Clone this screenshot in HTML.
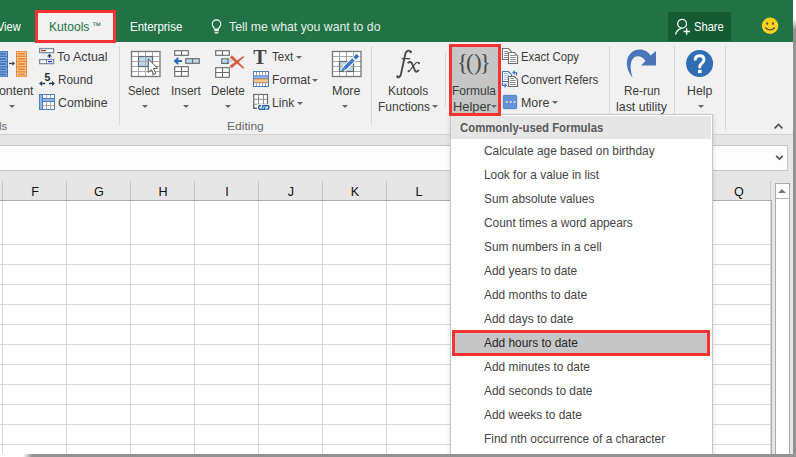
<!DOCTYPE html><html><head><meta charset="utf-8"><style>
html,body{margin:0;padding:0;}
body{width:796px;height:457px;position:relative;overflow:hidden;background:#fff;font-family:"Liberation Sans",sans-serif;}
#shot{position:absolute;left:0;top:0;width:793px;height:454px;overflow:hidden;background:#fff;}
.a{position:absolute;}
.t{position:absolute;white-space:nowrap;font-size:11.8px;line-height:14px;color:#3c3c3c;}
.arr{position:absolute;width:0;height:0;border-left:3px solid transparent;border-right:3px solid transparent;border-top:3px solid #666;}
.sep{position:absolute;width:1px;background:#d6d6d6;}
.hl{position:absolute;height:1px;background:#d9d9d9;}
.vl{position:absolute;width:1px;background:#d9d9d9;}
.ch{position:absolute;top:182px;height:20px;line-height:20px;text-align:center;font-size:12.6px;color:#111;}
.mi{position:absolute;left:484px;white-space:nowrap;font-size:11.8px;line-height:14px;color:#444;}
</style></head><body>
<div class="a" style="left:793px;top:19px;width:3px;height:438px;background:linear-gradient(#fff,#939393 11px);"></div>
<div class="a" style="left:23px;top:454px;width:773px;height:3px;background:linear-gradient(90deg,#fff,#939393 9px);"></div>
<div id="shot">
<div class="a" style="left:0;top:0;width:793px;height:42px;background:#217346;"></div>
<div class="t" style="left:-3.5px;top:19.70px;color:#fff;font-size:12.4px;transform:scaleX(0.8859);transform-origin:0 0;">View</div>
<div class="a" style="left:35px;top:10px;width:75px;height:27px;background:#f1f1f1;border:3px solid #f1f1f1;"></div>
<div class="a" style="left:35px;top:10px;width:75px;height:27px;border:3px solid #f83232;z-index:3;"></div>
<div class="t" style="left:49px;top:19.70px;color:#217346;font-size:12.4px;transform:scaleX(0.9772);transform-origin:0 0;">Kutools</div>
<div class="t" style="left:91.6px;top:18.97px;color:#217346;font-size:9.6px;transform:scaleX(0.9590);transform-origin:0 0;">&#8482;</div>
<div class="t" style="left:130px;top:19.70px;color:#fff;font-size:12.4px;transform:scaleX(0.9259);transform-origin:0 0;">Enterprise</div>
<div class="t" style="left:228.5px;top:19.70px;color:#e6eee9;font-size:12.4px;transform:scaleX(0.9908);transform-origin:0 0;">Tell me what you want to do</div>
<div class="a" style="left:668px;top:12px;width:63px;height:29px;background:#145a32;"></div>
<div class="t" style="left:693.5px;top:19.70px;color:#fff;font-size:12.4px;transform:scaleX(0.9009);transform-origin:0 0;">Share</div>
<div class="a" style="left:0;top:42px;width:793px;height:92px;background:#f1f1f1;"></div>
<div class="a" style="left:0;top:134px;width:793px;height:1px;background:#d2d2d2;"></div>
<div class="sep" style="left:119px;top:46px;height:79px"></div>
<div class="sep" style="left:371px;top:46px;height:79px"></div>
<div class="sep" style="left:445px;top:52px;height:55px"></div>
<div class="sep" style="left:609px;top:46px;height:79px"></div>
<div class="sep" style="left:674px;top:46px;height:79px"></div>
<div class="sep" style="left:725px;top:46px;height:84px"></div>
<div class="t" style="left:-10px;top:83.70px;font-size:12.4px;transform:scaleX(1.0022);transform-origin:0 0;">Content</div>
<div class="arr" style="left:9px;top:104.5px;border-top-color:#666"></div>
<div class="t" style="left:-19.5px;top:119.05px;color:#666;font-size:11.4px;transform:scaleX(0.9777);transform-origin:0 0;">Tools</div>
<div class="t" style="left:57.3px;top:49.70px;font-size:12.4px;transform:scaleX(1.0044);transform-origin:0 0;">To Actual</div>
<div class="t" style="left:57.7px;top:72.70px;font-size:12.4px;transform:scaleX(0.9530);transform-origin:0 0;">Round</div>
<div class="t" style="left:57.7px;top:95.70px;font-size:12.4px;transform:scaleX(1.0001);transform-origin:0 0;">Combine</div>
<div class="t" style="left:128.2px;top:83.70px;font-size:12.4px;transform:scaleX(0.9147);transform-origin:0 0;">Select</div>
<div class="arr" style="left:142px;top:104.5px;border-top-color:#666"></div>
<div class="t" style="left:171.4px;top:83.70px;font-size:12.4px;transform:scaleX(0.9645);transform-origin:0 0;">Insert</div>
<div class="arr" style="left:183px;top:104.5px;border-top-color:#666"></div>
<div class="t" style="left:211.4px;top:83.70px;font-size:12.4px;transform:scaleX(0.9462);transform-origin:0 0;">Delete</div>
<div class="arr" style="left:225px;top:104.5px;border-top-color:#666"></div>
<div class="t" style="left:227px;top:119.05px;color:#666;font-size:11.4px;transform:scaleX(1.0561);transform-origin:0 0;">Editing</div>
<div class="t" style="left:271.6px;top:49.70px;font-size:12.4px;transform:scaleX(0.9369);transform-origin:0 0;">Text</div>
<div class="arr" style="left:295.5px;top:55.5px;border-top-color:#666"></div>
<div class="t" style="left:271.7px;top:72.70px;font-size:12.4px;transform:scaleX(0.9809);transform-origin:0 0;">Format</div>
<div class="arr" style="left:312.3px;top:78.5px;border-top-color:#666"></div>
<div class="t" style="left:271.7px;top:95.70px;font-size:12.4px;transform:scaleX(0.9809);transform-origin:0 0;">Link</div>
<div class="arr" style="left:296.5px;top:101.5px;border-top-color:#666"></div>
<div class="t" style="left:331.8px;top:83.70px;font-size:12.4px;transform:scaleX(1.0059);transform-origin:0 0;">More</div>
<div class="arr" style="left:342px;top:104.5px;border-top-color:#666"></div>
<div class="t" style="left:387.7px;top:83.70px;font-size:12.4px;transform:scaleX(0.9748);transform-origin:0 0;">Kutools</div>
<div class="t" style="left:377.7px;top:99.70px;font-size:12.4px;transform:scaleX(0.9677);transform-origin:0 0;">Functions</div>
<div class="arr" style="left:432px;top:104.5px;border-top-color:#666"></div>
<div class="a" style="left:449px;top:44px;width:46px;height:66px;background:#c6c6c6;border:3px solid #c6c6c6;"></div>
<div class="a" style="left:449px;top:44px;width:46px;height:66px;border:3px solid #f83232;z-index:3;"></div>
<div class="t" style="left:451.9px;top:83.70px;font-size:12.4px;transform:scaleX(0.9680);transform-origin:0 0;">Formula</div>
<div class="t" style="left:452.8px;top:100.20px;font-size:12.4px;transform:scaleX(1.0379);transform-origin:0 0;">Helper</div>
<div class="arr" style="left:491px;top:104.5px;border-top-color:#666"></div>
<div class="t" style="left:520.9px;top:49.70px;font-size:12.4px;transform:scaleX(0.9138);transform-origin:0 0;">Exact Copy</div>
<div class="t" style="left:520.9px;top:72.70px;font-size:12.4px;transform:scaleX(0.9277);transform-origin:0 0;">Convert Refers</div>
<div class="t" style="left:520.9px;top:96.20px;font-size:12.4px;transform:scaleX(1.0023);transform-origin:0 0;">More</div>
<div class="arr" style="left:551.5px;top:101.0px;border-top-color:#666"></div>
<div class="t" style="left:623.8px;top:83.70px;font-size:12.4px;transform:scaleX(0.9505);transform-origin:0 0;">Re-run</div>
<div class="t" style="left:615.9px;top:100.20px;font-size:12.4px;transform:scaleX(1.0006);transform-origin:0 0;">last utility</div>
<div class="t" style="left:686.5px;top:83.70px;font-size:12.4px;transform:scaleX(0.9928);transform-origin:0 0;">Help</div>
<div class="arr" style="left:698px;top:104.5px;border-top-color:#666"></div>
<svg class="a" style="left:772px;top:121px" width="12" height="10"><path d="M2.6 7.3 L6.5 3.4 L10.4 7.3" fill="none" stroke="#555" stroke-width="1.8"/></svg>
<svg class="a" style="left:0;top:0" width="793" height="134" viewBox="0 0 793 134"><rect x="-2" y="51" width="10" height="26" fill="#3f72b8"/><rect x="-1" y="52.30" width="7.5" height="2.8" fill="none" stroke="#8db3e0" stroke-width="1"/><rect x="-1" y="57.50" width="7.5" height="2.8" fill="none" stroke="#8db3e0" stroke-width="1"/><rect x="-1" y="62.70" width="7.5" height="2.8" fill="none" stroke="#8db3e0" stroke-width="1"/><rect x="-1" y="67.90" width="7.5" height="2.8" fill="none" stroke="#8db3e0" stroke-width="1"/><rect x="-1" y="73.10" width="7.5" height="2.8" fill="none" stroke="#8db3e0" stroke-width="1"/><rect x="16" y="51" width="11" height="26" fill="#e8883a"/><rect x="17.5" y="52.30" width="8" height="2.8" fill="none" stroke="#f6cb91" stroke-width="1"/><rect x="17.5" y="57.50" width="8" height="2.8" fill="none" stroke="#f6cb91" stroke-width="1"/><rect x="17.5" y="62.70" width="8" height="2.8" fill="none" stroke="#f6cb91" stroke-width="1"/><rect x="17.5" y="67.90" width="8" height="2.8" fill="none" stroke="#f6cb91" stroke-width="1"/><rect x="17.5" y="73.10" width="8" height="2.8" fill="none" stroke="#f6cb91" stroke-width="1"/><path d="M9 63.5 H14" stroke="#444" stroke-width="1.3"/><path d="M12.5 61.3 L15 63.5 L12.5 65.7Z" fill="#444"/><rect x="39.6" y="48.6" width="14" height="4" fill="#fff" stroke="#7e8ba0" stroke-width="1.3"/><path d="M41 50.6 H46" stroke="#a83a10" stroke-width="1.2"/><path d="M49.5 58 V54.5" stroke="#2d3f5e" stroke-width="1.2"/><path d="M47 56.5 L49.5 53.8 L52 56.5Z" fill="#2d3f5e"/><rect x="39.6" y="59.6" width="14" height="4" fill="#fff" stroke="#7e8ba0" stroke-width="1.3"/><path d="M46.5 59.6 V63.6" stroke="#7e8ba0" stroke-width="1"/><path d="M48 61.6 H52" stroke="#1a3ad0" stroke-width="1.2"/><text x="44.6" y="80.8" font-family="Liberation Sans" font-weight="bold" font-size="10.5" fill="#2a2a2a">5</text><path d="M41 83.5 H45.2 M49 83.5 H53" stroke="#2c3e5c" stroke-width="1.3"/><path d="M39 83.5 L42 81.1 L42 85.9 Z M55 83.5 L52 81.1 L52 85.9 Z" fill="#2c3e5c"/><rect x="39.5" y="94.5" width="15" height="15" fill="#fff" stroke="#4a7fc1" stroke-width="1"/><path d="M46.5 95 V98.5 M50.5 95 V98.5 M46.5 101.5 V109 M50.5 101.5 V109 M43 105.5 H54" stroke="#a9a9a9" stroke-width="1"/><rect x="40" y="95" width="2.5" height="14" fill="#8db4e2"/><rect x="42.5" y="98.5" width="12" height="3" fill="#8db4e2" stroke="#4a7fc1" stroke-width="1"/><path d="M42.5 94.5 V109.5" stroke="#4a7fc1" stroke-width="1"/><rect x="131.5" y="51.5" width="28.5" height="25.0" fill="#fff" stroke="none"/><line x1="138.5" y1="51.5" x2="138.5" y2="76.5" stroke="#a8a8a8" stroke-width="1"/><line x1="145.5" y1="51.5" x2="145.5" y2="76.5" stroke="#a8a8a8" stroke-width="1"/><line x1="152.5" y1="51.5" x2="152.5" y2="76.5" stroke="#a8a8a8" stroke-width="1"/><line x1="131.5" y1="56.5" x2="160" y2="56.5" stroke="#a8a8a8" stroke-width="1"/><line x1="131.5" y1="61.5" x2="160" y2="61.5" stroke="#a8a8a8" stroke-width="1"/><line x1="131.5" y1="66.5" x2="160" y2="66.5" stroke="#a8a8a8" stroke-width="1"/><line x1="131.5" y1="71.5" x2="160" y2="71.5" stroke="#a8a8a8" stroke-width="1"/><rect x="131.5" y="51.5" width="28.5" height="25.0" fill="none" stroke="#7a7a7a" stroke-width="1.35"/><rect x="138.5" y="56.5" width="14" height="10" fill="#bdd7ee" stroke="#666" stroke-width="1.2"/><path d="M138.5 61.5 H152.5 M145.5 56.5 V66.5" stroke="#a8a8a8" stroke-width="1"/><path d="M148.3 58.8 L148.3 72.5 L151.3 69.6 L153.8 74.6 L156 73.5 L153.5 68.5 L157.5 68.3 Z" fill="#fff" stroke="#555" stroke-width="1"/><g fill="#fff" stroke="#6b6b6b" stroke-width="1.15"><rect x="174.7" y="50.7" width="13.6" height="4.6"/><path d="M181.5 50.7 V55.3"/><rect x="174.7" y="66.7" width="13.6" height="9.6"/><path d="M181.5 66.7 V76.3 M174.7 71.5 H188.3"/></g><rect x="185.7" y="58.7" width="13.6" height="4.6" fill="#bdd7ee" stroke="#6b6b6b" stroke-width="1.15"/><path d="M192.5 58.7 V63.3" stroke="#6b6b6b" stroke-width="1.15"/><path d="M176 61 H182" stroke="#2f6db5" stroke-width="2"/><path d="M178.3 58 L175 61 L178.3 64" fill="none" stroke="#2f6db5" stroke-width="2"/><g fill="#fff" stroke="#6b6b6b" stroke-width="1.15"><rect x="215.7" y="50.7" width="13.6" height="4.6"/><path d="M222.5 50.7 V55.3"/><rect x="215.7" y="67.7" width="13.6" height="9.6"/><path d="M222.5 67.7 V77.3 M215.7 72.5 H229.3"/></g><path d="M221.7 58.7 H230 L233 61 L230 63.3 H221.7 Z" fill="#bdd7ee" stroke="none"/><path d="M229 58.7 H221.7 V63.3 H229 M228 58.7 V63.3" fill="none" stroke="#6b6b6b" stroke-width="1.15"/><path d="M230.09 57.59 L243.26 68.57 L243.94 67.83 L231.91 55.61 Z M231.65 68.05 L243.91 57.09 L243.29 56.31 L229.95 65.95 Z" fill="#d9563a" stroke="#d9563a" stroke-width="0.5" stroke-linejoin="round"/><text x="253.3" y="64" font-family="Liberation Serif" font-weight="bold" font-size="20" fill="#444">T</text><rect x="253" y="71" width="16" height="16" fill="#4a7fc1"/><rect x="254" y="72" width="14" height="3.3" fill="#fff"/><rect x="254" y="83.2" width="14" height="2.8" fill="#fff"/><path d="M256.5 72 V75.3 M256.5 83.2 V86" stroke="#999" stroke-width="0.9"/><path d="M259.5 72 V75.3 M259.5 83.2 V86" stroke="#999" stroke-width="0.9"/><path d="M262.5 72 V75.3 M262.5 83.2 V86" stroke="#999" stroke-width="0.9"/><path d="M265.5 72 V75.3 M265.5 83.2 V86" stroke="#999" stroke-width="0.9"/><rect x="254" y="76.2" width="14" height="2.3" fill="#8db4e2"/><rect x="254" y="78.8" width="14" height="4" fill="#f09a48"/><rect x="254" y="79.8" width="14" height="2.2" fill="#f3c98f"/><g stroke="#6b6b6b" fill="none"><rect x="253.7" y="94.5" width="13.8" height="13.8" stroke-width="1.2" fill="#fff"/><path d="M258.5 94.5 V108.3 M263.5 94.5 V104.5 M253.7 99.3 H267.5 M253.7 104.2 H267.5" stroke-width="1" stroke="#8a8a8a"/></g><rect x="257" y="104.2" width="13" height="7" fill="#f1f1f1"/><path d="M253.7 104.2 V108.3 H257" fill="none" stroke="#6b6b6b" stroke-width="1.2"/><path d="M261 105.8 H260 Q258.6 105.8 258.6 107.5 Q258.6 109.2 260 109.2 H264.4 L265.2 107.3 M262.3 107.8 L262.9 105.8 H267.6 Q268.9 105.8 268.9 107.5 Q268.9 109.2 267.6 109.2 H266.4" fill="none" stroke="#1b5eb3" stroke-width="1.4"/><rect x="332.5" y="51.5" width="28.5" height="25.0" fill="#fff" stroke="none"/><line x1="339.5" y1="51.5" x2="339.5" y2="76.5" stroke="#a8a8a8" stroke-width="1"/><line x1="346.5" y1="51.5" x2="346.5" y2="76.5" stroke="#a8a8a8" stroke-width="1"/><line x1="353.5" y1="51.5" x2="353.5" y2="76.5" stroke="#a8a8a8" stroke-width="1"/><line x1="332.5" y1="56.5" x2="361" y2="56.5" stroke="#a8a8a8" stroke-width="1"/><line x1="332.5" y1="61.5" x2="361" y2="61.5" stroke="#a8a8a8" stroke-width="1"/><line x1="332.5" y1="66.5" x2="361" y2="66.5" stroke="#a8a8a8" stroke-width="1"/><line x1="332.5" y1="71.5" x2="361" y2="71.5" stroke="#a8a8a8" stroke-width="1"/><rect x="332.5" y="51.5" width="28.5" height="25.0" fill="none" stroke="#7a7a7a" stroke-width="1.35"/><rect x="339.5" y="61.5" width="14" height="10" fill="#bdd7ee" stroke="#666" stroke-width="1.2"/><path d="M339.5 66.5 H353.5 M346.5 61.5 V71.5" stroke="#a8a8a8" stroke-width="1"/><path d="M343 70 L354 59" stroke="#fff" stroke-width="5.5"/><path d="M344.5 68.5 L353.5 59.5" stroke="#3c78c4" stroke-width="3.6"/><path d="M341.5 71.3 L342.8 67.2 L345.6 70 Z" fill="#3c78c4"/><path d="M354 59 L358.2 54.8" stroke="#fff" stroke-width="5.2"/><path d="M354.6 58.4 L357.9 55.1" stroke="#3c78c4" stroke-width="3.8"/><g fill="none" stroke="#4a4a4a" stroke-linecap="round"><path d="M410.8 51.8 C409.6 49.9, 406.4 50.2, 405.4 53.6 L400.9 74.4 C400.3 76.9, 398.6 77.9, 397.3 76.9" stroke-width="1.9"/><path d="M402.2 58.6 H409.8" stroke-width="1.2"/><path d="M408.2 62.6 C410.4 61.3, 411.5 62, 412.5 64.6 L415 70.6 C415.6 72, 416.8 72.2, 418.4 70.4" stroke-width="1.85"/><path d="M419 62.8 C417.6 61.7, 416.2 62.3, 414.6 64.3 L410.5 69.6 C409.6 70.8, 408.9 71.3, 408.3 71.1" stroke-width="1.1"/></g><g fill="#4a4a4a"><circle cx="410.6" cy="52" r="1.15"/><circle cx="397.6" cy="76.3" r="1.15"/><circle cx="418.9" cy="63.3" r="1.05"/><circle cx="408.7" cy="71.3" r="1.05"/></g><g font-family="Liberation Serif" font-size="23" fill="#4a4a4a"><text x="457" y="69.6">{</text><text x="466" y="69.6">(</text><text x="474" y="69.6">)</text><text x="479.8" y="69.6">}</text></g><g fill="#fff" stroke="#6e6e6e" stroke-width="1.2"><path d="M502.5 48.5 H508.3 L511.5 51.7 V59.5 H502.5 Z"/><path d="M508.5 52.5 H514.3 L517.5 55.7 V63.5 H508.5 Z"/></g><path d="M504 51.5 H508 M504 53.5 H508 M504 55.5 H508 M504 57.5 H508 M510.2 55.5 H515.8 M510.2 57.5 H515.8 M510.2 59.5 H515.8 M510.2 61.5 H515.8" stroke="#8c8c8c" stroke-width="1"/><path d="M502.5 71.5 H508.3 L511.5 74.7 V81.5 H502.5 Z" fill="#fff" stroke="#3f74bb" stroke-width="1.2"/><path d="M504 73.5 H508 M504 75.5 H509 M504 77.5 H509 M504 79.5 H509" stroke="#a9c2e2" stroke-width="1"/><path d="M508.5 76.5 H514.3 L517.5 79.7 V86.5 H508.5 Z" fill="#fff" stroke="#6e6e6e" stroke-width="1.2"/><path d="M510.2 78.5 H514 M510.2 80.5 H515.8 M510.2 82.5 H515.8 M510.2 84.5 H515.8" stroke="#8c8c8c" stroke-width="1"/><path d="M513.2 72.5 H516.5 V75.6" fill="none" stroke="#3f74bb" stroke-width="1.2"/><path d="M514.8 70.6 L512.9 72.5 L514.8 74.4" fill="none" stroke="#3f74bb" stroke-width="1.1"/><path d="M502.5 82.6 V85.5 H506.2" fill="none" stroke="#3f74bb" stroke-width="1.2"/><path d="M504.5 83.6 L506.4 85.5 L504.5 87.4" fill="none" stroke="#3f74bb" stroke-width="1.1"/><rect x="503.3" y="95.3" width="13.4" height="13.4" rx="1" fill="#6393d9" stroke="#4a73b8" stroke-width="0.8"/><rect x="505.8" y="101.2" width="1.8" height="1.8" fill="#efe3cc"/><rect x="509.8" y="101.2" width="1.8" height="1.8" fill="#efe3cc"/><rect x="513.6" y="101.2" width="1.8" height="1.8" fill="#efe3cc"/><path d="M632.6 78 C625.5 69, 624.5 58, 632 52 C639 47.5, 647 49.5, 650.5 55.5 L656 51 L656 65.6 L641 65.6 L645.5 61 C642.5 56, 636.5 54.5, 633 58.5 C629.5 62.5, 630.5 70.5, 632.6 78 Z" fill="#4b76ba"/><circle cx="699.6" cy="63.5" r="13.5" fill="#2f6db4"/><path d="M695.1 60.4 C695.1 57.1, 697.2 55.8, 699.6 55.8 C702.3 55.8, 704 57.5, 704 59.8 C704 62.6, 700.5 63.4, 699.8 66.2 V68.2" fill="none" stroke="#fff" stroke-width="2.9"/><rect x="698" y="69.8" width="3.6" height="3.3" fill="#fff"/></svg>
<svg class="a" style="left:0;top:0" width="793" height="42" viewBox="0 0 793 42"><path d="M214.5 29 C213.8 27, 212.2 26, 212.2 24.2 A4.3 4.3 0 0 1 220.8 24.2 C220.8 26, 219.2 27, 218.5 29 Z" fill="none" stroke="#fff" stroke-width="1.15"/><rect x="214.3" y="29.2" width="4.4" height="2" fill="#fff"/><path d="M214.6 32.8 H218.4" stroke="#fff" stroke-width="1.2"/><circle cx="682.1" cy="23.7" r="4.4" fill="none" stroke="#fff" stroke-width="1.3"/><path d="M675.6 34.5 C676.3 31, 678.5 29, 681.5 28.3" fill="none" stroke="#fff" stroke-width="1.3"/><path d="M683.5 31.5 H690 M686.7 28.3 V34.7" stroke="#fff" stroke-width="1.3"/><circle cx="770.1" cy="25.8" r="8.2" fill="#fdd116"/><ellipse cx="767.2" cy="23.6" rx="1" ry="1.4" fill="#4b4a5c"/><ellipse cx="773" cy="23.6" rx="1" ry="1.4" fill="#4b4a5c"/><path d="M765.3 27.5 Q770.1 32.5 774.9 27.5" fill="none" stroke="#4b4a5c" stroke-width="1.1"/></svg>
<div class="a" style="left:0;top:135px;width:793px;height:36px;background:#e6e6e6;"></div>
<div class="a" style="left:0;top:145px;width:787px;height:24px;background:#fdfdfd;border-top:1px solid #c6c6c6;border-bottom:1px solid #c6c6c6;border-right:1px solid #c6c6c6;"></div>
<svg class="a" style="left:770px;top:150px" width="16" height="16"><path d="M6.2 5.8 L9.5 9.1 L12.8 5.8" fill="none" stroke="#555" stroke-width="1.8"/></svg>
<div class="a" style="left:0;top:171px;width:793px;height:283px;background:#e6e6e6;"></div>
<div class="a" style="left:0;top:201px;width:770px;height:253px;background:#fff;"></div>
<div class="a" style="left:0;top:200px;width:771px;height:1px;background:#ababab;"></div>
<div class="a" style="left:770px;top:200px;width:2px;height:254px;background:#ababab;"></div>
<div class="ch" style="left:3.5px;width:63px">F</div>
<div class="ch" style="left:67.5px;width:63px">G</div>
<div class="ch" style="left:131.5px;width:63px">H</div>
<div class="ch" style="left:195.5px;width:63px">I</div>
<div class="ch" style="left:259.5px;width:63px">J</div>
<div class="ch" style="left:323.5px;width:63px">K</div>
<div class="ch" style="left:387.5px;width:63px">L</div>
<div class="ch" style="left:451.5px;width:63px">M</div>
<div class="ch" style="left:515.5px;width:63px">N</div>
<div class="ch" style="left:579.5px;width:63px">O</div>
<div class="ch" style="left:643.5px;width:63px">P</div>
<div class="ch" style="left:707.5px;width:63px">Q</div>
<div class="vl" style="left:2px;top:181px;height:19px;background:#c6c6c6"></div>
<div class="vl" style="left:2px;top:201px;height:253px"></div>
<div class="vl" style="left:66px;top:181px;height:19px;background:#c6c6c6"></div>
<div class="vl" style="left:66px;top:201px;height:253px"></div>
<div class="vl" style="left:130px;top:181px;height:19px;background:#c6c6c6"></div>
<div class="vl" style="left:130px;top:201px;height:253px"></div>
<div class="vl" style="left:194px;top:181px;height:19px;background:#c6c6c6"></div>
<div class="vl" style="left:194px;top:201px;height:253px"></div>
<div class="vl" style="left:258px;top:181px;height:19px;background:#c6c6c6"></div>
<div class="vl" style="left:258px;top:201px;height:253px"></div>
<div class="vl" style="left:322px;top:181px;height:19px;background:#c6c6c6"></div>
<div class="vl" style="left:322px;top:201px;height:253px"></div>
<div class="vl" style="left:386px;top:181px;height:19px;background:#c6c6c6"></div>
<div class="vl" style="left:386px;top:201px;height:253px"></div>
<div class="vl" style="left:450px;top:181px;height:19px;background:#c6c6c6"></div>
<div class="vl" style="left:450px;top:201px;height:253px"></div>
<div class="vl" style="left:514px;top:181px;height:19px;background:#c6c6c6"></div>
<div class="vl" style="left:514px;top:201px;height:253px"></div>
<div class="vl" style="left:578px;top:181px;height:19px;background:#c6c6c6"></div>
<div class="vl" style="left:578px;top:201px;height:253px"></div>
<div class="vl" style="left:642px;top:181px;height:19px;background:#c6c6c6"></div>
<div class="vl" style="left:642px;top:201px;height:253px"></div>
<div class="vl" style="left:706px;top:181px;height:19px;background:#c6c6c6"></div>
<div class="vl" style="left:706px;top:201px;height:253px"></div>
<div class="vl" style="left:770px;top:181px;height:19px;background:#c6c6c6"></div>
<div class="vl" style="left:770px;top:201px;height:253px"></div>
<div class="hl" style="left:0;top:244px;width:770px"></div>
<div class="hl" style="left:0;top:264px;width:770px"></div>
<div class="hl" style="left:0;top:284px;width:770px"></div>
<div class="hl" style="left:0;top:304px;width:770px"></div>
<div class="hl" style="left:0;top:324px;width:770px"></div>
<div class="hl" style="left:0;top:344px;width:770px"></div>
<div class="hl" style="left:0;top:364px;width:770px"></div>
<div class="hl" style="left:0;top:384px;width:770px"></div>
<div class="hl" style="left:0;top:404px;width:770px"></div>
<div class="hl" style="left:0;top:424px;width:770px"></div>
<div class="hl" style="left:0;top:444px;width:770px"></div>
<div class="a" style="left:775px;top:183px;width:13px;height:14px;background:#fff;border:1px solid #ababab;"></div>
<div class="a" style="left:778px;top:189px;width:0;height:0;border-left:4px solid transparent;border-right:4px solid transparent;border-bottom:4px solid #777;"></div>
<div class="a" style="left:775px;top:198px;width:13px;height:260px;background:#fff;border:1px solid #ababab;"></div>
<div class="a" style="left:446px;top:114px;width:4px;height:340px;background:linear-gradient(90deg,rgba(0,0,0,0),rgba(0,0,0,0.06));"></div>
<div class="a" style="left:713px;top:114px;width:4px;height:340px;background:linear-gradient(90deg,rgba(0,0,0,0.07),rgba(0,0,0,0));"></div>
<div class="a" style="left:450px;top:114px;width:261px;height:400px;background:#fff;border:1px solid #c6c6c6;"></div>
<div class="a" style="left:451px;top:116px;width:260px;height:23px;background:#e6e6e6;"></div>
<div class="t" style="left:459.8px;top:120.70px;color:#595959;font-size:12.4px;font-weight:bold;transform:scaleX(0.9169);transform-origin:0 0;">Commonly-used Formulas</div>
<div class="t" style="left:483.8px;top:143.70px;color:#444;font-size:12.4px;transform:scaleX(0.9600);transform-origin:0 0;">Calculate age based on birthday</div>
<div class="t" style="left:483.8px;top:167.70px;color:#444;font-size:12.4px;transform:scaleX(0.9600);transform-origin:0 0;">Look for a value in list</div>
<div class="t" style="left:483.8px;top:191.70px;color:#444;font-size:12.4px;transform:scaleX(0.9600);transform-origin:0 0;">Sum absolute values</div>
<div class="t" style="left:483.8px;top:215.70px;color:#444;font-size:12.4px;transform:scaleX(0.9600);transform-origin:0 0;">Count times a word appears</div>
<div class="t" style="left:483.8px;top:239.70px;color:#444;font-size:12.4px;transform:scaleX(0.9600);transform-origin:0 0;">Sum numbers in a cell</div>
<div class="t" style="left:483.8px;top:263.70px;color:#444;font-size:12.4px;transform:scaleX(0.9600);transform-origin:0 0;">Add years to date</div>
<div class="t" style="left:483.8px;top:287.70px;color:#444;font-size:12.4px;transform:scaleX(0.9600);transform-origin:0 0;">Add months to date</div>
<div class="t" style="left:483.8px;top:311.70px;color:#444;font-size:12.4px;transform:scaleX(0.9600);transform-origin:0 0;">Add days to date</div>
<div class="a" style="left:452px;top:330px;width:252px;height:20px;background:#c6c6c6;border:3px solid #f83232;"></div>
<div class="t" style="left:483.8px;top:335.70px;color:#262626;font-size:12.4px;transform:scaleX(0.9600);transform-origin:0 0;">Add hours to date</div>
<div class="t" style="left:483.8px;top:359.70px;color:#444;font-size:12.4px;transform:scaleX(0.9600);transform-origin:0 0;">Add minutes to date</div>
<div class="t" style="left:483.8px;top:383.70px;color:#444;font-size:12.4px;transform:scaleX(0.9600);transform-origin:0 0;">Add seconds to date</div>
<div class="t" style="left:483.8px;top:407.70px;color:#444;font-size:12.4px;transform:scaleX(0.9600);transform-origin:0 0;">Add weeks to date</div>
<div class="t" style="left:483.8px;top:431.70px;color:#444;font-size:12.4px;transform:scaleX(0.9600);transform-origin:0 0;">Find nth occurrence of a character</div>
</div></body></html>
